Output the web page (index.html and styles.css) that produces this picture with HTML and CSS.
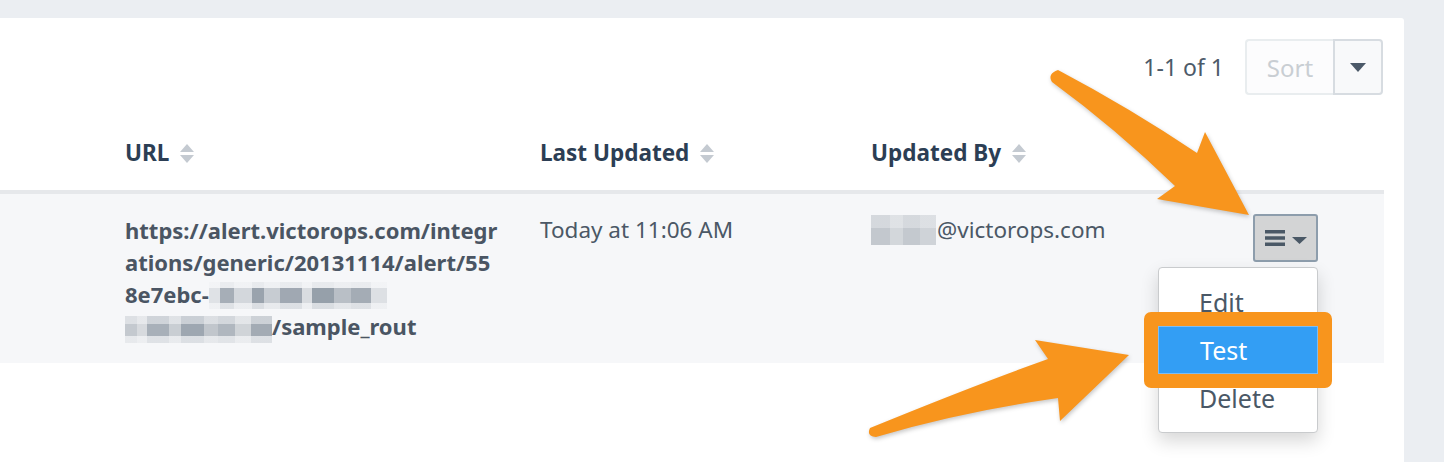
FILE: index.html
```html
<!DOCTYPE html>
<html lang="en">
<head>
<meta charset="utf-8">
<title>Integrations</title>
<link rel="stylesheet" href="styles.css">
</head>
<body>
<div class="page">
  <main class="card">
    <div class="toolbar">
      <span class="count">1-1 of 1</span>
      <div class="sort">
        <button class="sort-label" type="button">Sort</button>
        <button class="sort-toggle" type="button" aria-label="Sort options">
          <svg width="16" height="9" viewBox="0 0 16 9"><path d="M0 0H16L8 9Z" fill="#4b5968"/></svg>
        </button>
      </div>
    </div>

    <div class="table">
      <div class="row head">
        <div class="cell"></div>
        <div class="cell">URL <svg class="sorticon" width="14" height="19" viewBox="0 0 14 19"><path d="M0 8L7 0L14 8Z M0 11L14 11L7 19Z" fill="#c4cad1"/></svg></div>
        <div class="cell">Last Updated <svg class="sorticon" width="14" height="19" viewBox="0 0 14 19"><path d="M0 8L7 0L14 8Z M0 11L14 11L7 19Z" fill="#c4cad1"/></svg></div>
        <div class="cell">Updated By <svg class="sorticon" width="14" height="19" viewBox="0 0 14 19"><path d="M0 8L7 0L14 8Z M0 11L14 11L7 19Z" fill="#c4cad1"/></svg></div>
        <div class="cell"></div>
      </div>

      <div class="row body">
        <div class="cell"></div>
        <div class="cell url">https://alert.victorops.com/integrations/generic/20131114/alert/558e7ebc-<span class="blur blur-a"></span><span class="blur blur-b"></span>/sample_rout</div>
        <div class="cell">Today at 11:06 AM</div>
        <div class="cell"><span class="blur blur-email"></span>@victorops.com</div>
        <div class="cell actions">
          <div class="action-wrap">
            <button class="action-btn" type="button" aria-label="Actions">
              <svg width="42" height="16" viewBox="0 0 42 16"><path d="M0 0H20V3.4H0Z M0 6.3H20V9.7H0Z M0 12.6H20V16H0Z" fill="#4a5866"/><path d="M27 7H42L34.5 14Z" fill="#4a5866"/></svg>
            </button>
            <ul class="menu">
              <li class="menu-item">Edit</li>
              <li class="menu-item active">Test</li>
              <li class="menu-item">Delete</li>
            </ul>
          </div>
        </div>
      </div>
    </div>
  </main>

  <svg class="annotations" width="1444" height="462" viewBox="0 0 1444 462">
    <path d="M1058 70 Q1130 108 1197 153 L1205 132 L1249 215 L1157 199 L1175 186 Q1115 128 1052 82 Q1047 74 1058 70 Z" fill="#f8951d"/>
    <path d="M870 428 Q975 385 1048 359 L1035 340 L1129 355 L1060 421 L1058 398 Q960 412 876 437 Q866 436 870 428 Z" fill="#f8951d"/>
  </svg>
</div>
</body>
</html>
```

FILE: styles.css
```css
* { box-sizing: border-box; }

html, body {
  margin: 0;
  padding: 0;
}

body {
  background: #ebeef2;
  font-family: "Noto Sans", "Open Sans", sans-serif;
  color: #4b5866;
  width: 1444px;
  height: 462px;
  overflow: hidden;
}

.page {
  position: relative;
  width: 1444px;
  height: 462px;
  padding-top: 18px;
}

.card {
  width: 1404px;
  height: 444px;
  background: #ffffff;
  border-top-right-radius: 3px;
}

.toolbar {
  display: flex;
  justify-content: flex-end;
  align-items: center;
  gap: 21px;
  padding: 21px 21px 0 0;
  height: 77px;
}

.count {
  font-size: 23px;
  color: #4c5a69;
}

.sort {
  display: flex;
  height: 56px;
}

.sort button {
  font-family: inherit;
  margin: 0;
  cursor: pointer;
}

.sort-label {
  width: 88px;
  background: #fcfcfd;
  border: 2px solid #e9edef;
  border-right: none;
  border-radius: 4px 0 0 4px;
  font-size: 24px;
  color: #c9ced3;
  padding: 0;
}

.sort-toggle {
  width: 50px;
  background: #f8f9fa;
  border: 2px solid #d7dce1;
  border-radius: 0 4px 4px 0;
  display: flex;
  align-items: center;
  justify-content: center;
  padding: 0;
}

.table {
  width: 1384px;
}

.row {
  display: grid;
  grid-template-columns: 125px 415px 331px 382px 131px;
}

.cell {
  font-size: 22.5px;
  line-height: 32px;
}

.head .cell {
  font-weight: 700;
  color: #2c3e54;
  padding: 42px 0 21px;
  white-space: nowrap;
}

.head {
  border-bottom: 4px solid #e6e8eb;
}

.sorticon {
  margin-left: 5px;
  vertical-align: -2px;
}

.body {
  background: #f6f7f9;
}

.body .cell {
  padding: 20px 0;
}

.body .cell.url {
  font-size: 22px;
  font-weight: 700;
  color: #4a5563;
  word-break: break-all;
  padding-right: 42px;
}

.blur {
  display: inline-block;
  vertical-align: middle;
  height: 27px;
}

.blur-a {
  width: 178px;
  margin-top: -4px;
  background:
    linear-gradient(180deg, rgba(246,247,249,.85) 0 22%, rgba(246,247,249,0) 22% 78%, rgba(246,247,249,.7) 78% 100%),
    linear-gradient(90deg, #dfe2e6 0 6%, #a6aeb7 6% 14%, #d3d7dc 14% 24%, #9aa3ad 24% 31%, #c7ccd2 31% 40%, #a0a8b2 40% 52%, #d9dce0 52% 58%, #96a0aa 58% 70%, #b9bfc6 70% 80%, #a4acb5 80% 91%, #dde0e4 91% 100%);
}

.blur-b {
  width: 147px;
  background:
    linear-gradient(180deg, rgba(246,247,249,.5) 0 30%, rgba(246,247,249,0) 30% 75%, rgba(246,247,249,.7) 75% 100%),
    linear-gradient(90deg, #c4c9cf 0 8%, #d7dade 8% 15%, #a8b0b9 15% 30%, #c9ced3 30% 38%, #9ea7b1 38% 54%, #c1c6cc 54% 63%, #b0b7bf 63% 75%, #d0d4d8 75% 86%, #a3abb4 86% 100%);
}

.blur-email {
  width: 65px;
  height: 30px;
  vertical-align: -7px;
  margin-right: 1px;
  background:
    linear-gradient(180deg, rgba(246,247,249,.35) 0 45%, rgba(246,247,249,0) 45% 100%),
    linear-gradient(90deg, #c3c8ce 0 30%, #d3d7db 30% 50%, #c4c9cf 50% 75%, #cfd3d8 75% 100%);
}

.body .cell.actions {
  padding: 20px 0 0;
}

.action-wrap {
  position: relative;
  width: 65px;
}

.action-btn {
  width: 65px;
  height: 48px;
  background: #d3d4d5;
  border: 2px solid #8d9dac;
  border-radius: 3px;
  display: flex;
  align-items: center;
  justify-content: center;
  padding: 0;
  margin: 0;
}

.menu {
  position: absolute;
  top: 53px;
  right: 0;
  width: 160px;
  margin: 0;
  padding: 10px 0;
  list-style: none;
  background: #ffffff;
  border: 1px solid #c9cbcd;
  border-radius: 4px;
  box-shadow: 0 8px 18px rgba(0, 0, 0, 0.16);
  z-index: 5;
}

.menu-item {
  position: relative;
  height: 48px;
  line-height: 48px;
  font-size: 25px;
  padding-left: 41px;
  color: #4a5866;
  margin: 0 -1px;
}

.menu-item.active {
  background: #339ef4;
  color: #ffffff;
  padding-left: 42px;
  box-shadow: inset 0 0 0 1px #7cbdf3;
}

.menu-item.active::after {
  content: "";
  position: absolute;
  inset: -14px;
  border: 14px solid #f8951d;
  border-radius: 7px;
}

.annotations {
  position: absolute;
  left: 0;
  top: 0;
  pointer-events: none;
  z-index: 10;
  filter: drop-shadow(1px 2px 2px rgba(0, 0, 0, 0.22));
}
```
